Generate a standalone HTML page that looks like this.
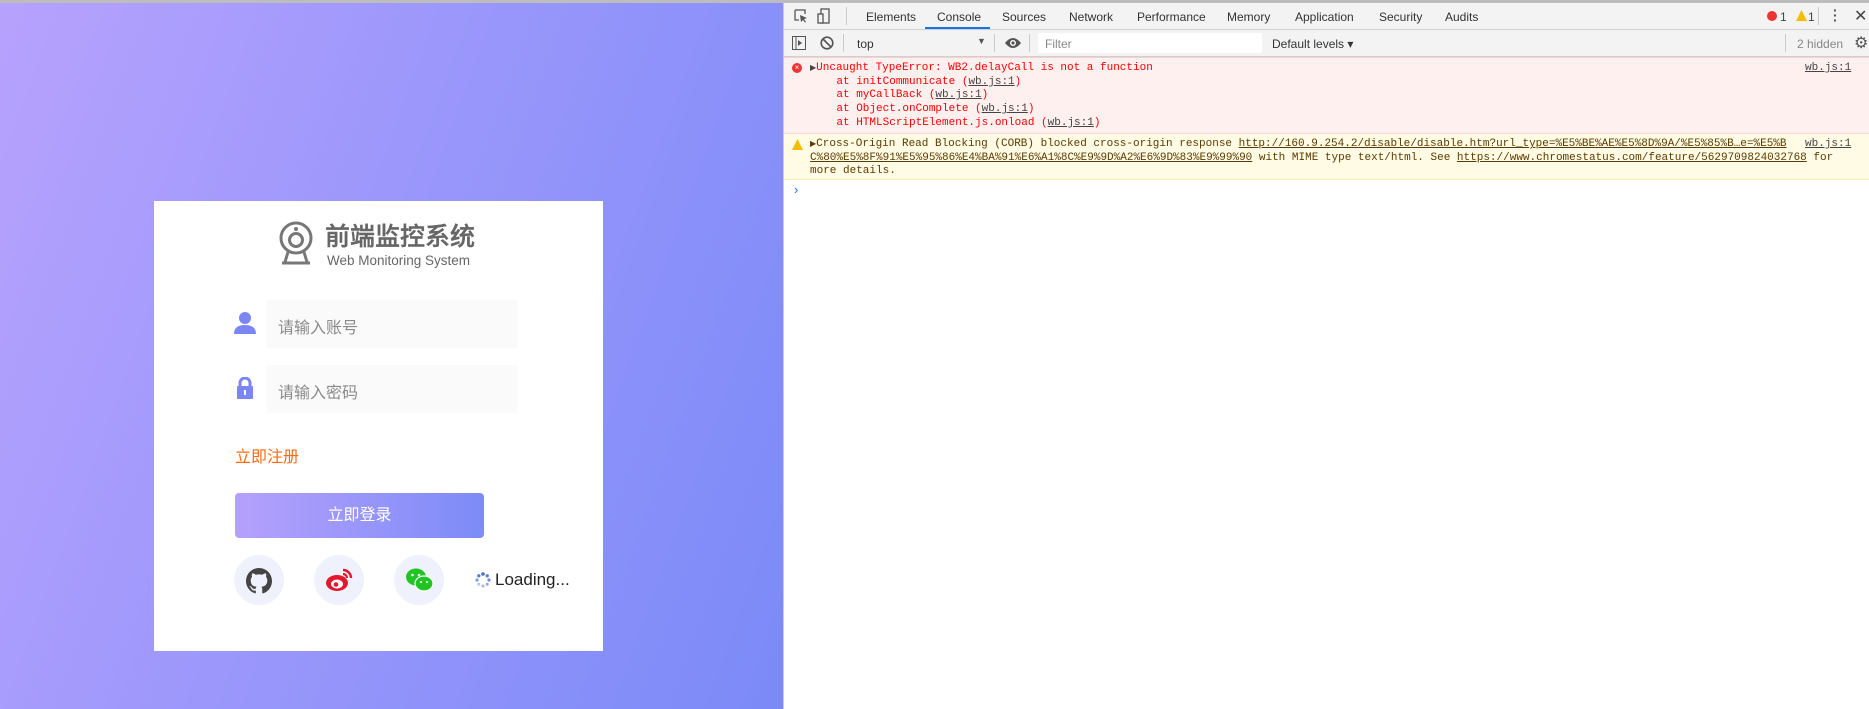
<!DOCTYPE html>
<html><head><meta charset="utf-8"><style>
*{margin:0;padding:0;box-sizing:border-box}
body{width:1869px;height:709px;overflow:hidden;position:relative;font-family:"Liberation Sans","Noto Sans CJK SC",sans-serif;background:#fff}
.abs{position:absolute}
#left{left:0;top:0;width:783px;height:709px;background:linear-gradient(110deg,#b7a2fd 0%,#9b97fb 45%,#7b8af8 100%)}
#topline{left:0;top:0;width:1869px;height:3px;background:#bdbdbd;z-index:5}
.card{left:154px;top:201px;width:449px;height:450px;background:#fff}
.ph{color:#8a8a8a;font-size:16px}
.input{background:#fafafa;width:250px;height:48px}
.circ{width:50px;height:50px;border-radius:50%;background:#eff1fd;top:555px}
#dev{left:783px;top:0;width:1086px;height:709px;background:#fff;border-left:1px solid #ccc}
.tb{background:#f3f3f3;border-bottom:1px solid #d0d0d0;width:1086px;left:0}
.tab{font-size:12px;color:#333;top:10px}
.mono{font-family:"Liberation Mono",monospace;font-size:11px;line-height:13.7px;white-space:pre}
u{text-decoration:underline}
</style></head><body>
<div id="topline" class="abs"></div>
<div id="left" class="abs"></div>
<div class="abs card"></div>
<svg class="abs" style="left:279px;top:221px" width="34" height="45" viewBox="0 0 34 45">
<circle cx="17" cy="17" r="15" fill="none" stroke="#777" stroke-width="3"/>
<circle cx="17" cy="19" r="6.5" fill="none" stroke="#777" stroke-width="3"/>
<circle cx="17" cy="8" r="2" fill="#777"/>
<path d="M9 31 L6 41 M25 31 L28 41 M3 42 H31" stroke="#777" stroke-width="3" fill="none"/>
</svg>
<div class="abs" style="left:325px;top:222px;font-size:25px;color:#666;font-weight:500;line-height:30px;-webkit-text-stroke:0.4px #666">前端监控系统</div>
<div class="abs" style="left:327px;top:253px;font-size:13.5px;color:#666;line-height:16px">Web Monitoring System</div>
<svg class="abs" style="left:234px;top:311px" width="22" height="23" viewBox="0 0 22 23"><circle cx="11" cy="7" r="6" fill="#7b86f4"/><path d="M0 23 Q0 14 11 14 Q22 14 22 23Z" fill="#7b86f4"/></svg>
<div class="abs input" style="left:267px;top:300px"></div>
<div class="abs ph" style="left:278px;top:314px">请输入账号</div>
<svg class="abs" style="left:237px;top:377px" width="16" height="22" viewBox="0 0 16 22"><path d="M3 10 V6 A5 5 0 0 1 13 6 V10" fill="none" stroke="#7b86f4" stroke-width="3"/><rect x="0" y="9" width="16" height="13" rx="1" fill="#7b86f4"/><rect x="7" y="13" width="2" height="5" fill="#fff"/></svg>
<div class="abs input" style="left:267px;top:365px"></div>
<div class="abs ph" style="left:278px;top:379px">请输入密码</div>
<div class="abs" style="left:235px;top:443px;font-size:16px;color:#ff6a13">立即注册</div>
<div class="abs" style="left:235px;top:493px;width:249px;height:45px;border-radius:4px;background:linear-gradient(90deg,#b5a1fc,#7d8bf8);color:#fff;font-size:16px;text-align:center;line-height:45px">立即登录</div>
<div class="abs circ" style="left:234px"></div>
<div class="abs circ" style="left:314px"></div>
<div class="abs circ" style="left:394px"></div>
<svg class="abs" style="left:246px;top:568px" width="26" height="26" viewBox="0 0 16 16"><path fill="#444" d="M8 0C3.58 0 0 3.580 0 8c0 3.540 2.290 6.530 5.470 7.590.4.070.55-.17.55-.38v-1.34c-2.230.48-2.700-1.070-2.700-1.070-.36-.93-.89-1.170-.89-1.170-.73-.5.05-.49.05-.49.8.06 1.230.83 1.230.83.71 1.220 1.870.87 2.330.66.07-.52.28-.87.51-1.070-1.780-.2-3.640-.89-3.640-3.950 0-.87.31-1.590.82-2.150-.08-.2-.36-1.020.08-2.120 0 0 .67-.21 2.200.82a7.600 7.600 0 0 1 4 0c1.530-1.040 2.200-.82 2.200-.82.44 1.100.16 1.920.08 2.120.51.56.82 1.270.82 2.150 0 3.070-1.870 3.750-3.650 3.950.29.25.54.73.54 1.480v2.200c0 .21.15.46.55.38A8 8 0 0 0 16 8c0-4.420-3.580-8-8-8z"/></svg>
<svg class="abs" style="left:325px;top:567px" width="28" height="26" viewBox="0 0 28 26"><ellipse cx="12" cy="16" rx="11" ry="8" fill="#e6162d"/><ellipse cx="12" cy="17" rx="6" ry="4.5" fill="#fff"/><circle cx="11" cy="17.5" r="2.3" fill="#e6162d"/><path d="M18 3 A8 8 0 0 1 26 11" stroke="#e6162d" stroke-width="2.5" fill="none"/><path d="M18 7 A4 4 0 0 1 22 11" stroke="#e6162d" stroke-width="2.2" fill="none"/></svg>
<svg class="abs" style="left:406px;top:567px" width="28" height="26" viewBox="0 0 28 26"><ellipse cx="10" cy="10" rx="10" ry="8.5" fill="#20c521"/><ellipse cx="18" cy="16.5" rx="9" ry="7.5" fill="#20c521" stroke="#fff" stroke-width="1.2"/><circle cx="6.5" cy="8" r="1.3" fill="#fff"/><circle cx="13" cy="8" r="1.3" fill="#fff"/><circle cx="15" cy="15" r="1.1" fill="#fff"/><circle cx="21" cy="15" r="1.1" fill="#fff"/></svg>
<svg class="abs" style="left:475px;top:572px" width="16" height="16" viewBox="0 0 16 16"><g fill="#4a6fd0"><circle cx="8" cy="2" r="1.8"/><circle cx="12.2" cy="3.8" r="1.7" opacity=".9"/><circle cx="14" cy="8" r="1.6" opacity=".8"/><circle cx="12.2" cy="12.2" r="1.5" opacity=".6"/><circle cx="8" cy="14" r="1.5" opacity=".5"/><circle cx="3.8" cy="12.2" r="1.5" opacity=".4"/><circle cx="2" cy="8" r="1.6" opacity=".7"/><circle cx="3.8" cy="3.8" r="1.7" opacity=".9"/></g></svg>
<div class="abs" style="left:495px;top:570px;font-size:17px;color:#222">Loading...</div>

<div id="dev" class="abs">
 <div class="abs tb" style="top:3px;height:27px"></div>
 <div class="abs tb" style="top:30px;height:27px"></div>
 <svg class="abs" style="left:10px;top:9px" width="14" height="14" viewBox="0 0 14 14"><path d="M1 1H11V5M1 1V11H5" stroke="#555" fill="none" stroke-width="1.3"/><path d="M6 6L13 9 10 10 12 13 11 13.5 9 11 7 13Z" fill="#555"/></svg>
 <svg class="abs" style="left:33px;top:8px" width="13" height="16" viewBox="0 0 13 16"><rect x="4" y="1" width="8" height="14" fill="none" stroke="#555" stroke-width="1.3"/><rect x="1" y="6" width="5" height="9" fill="#f3f3f3" stroke="#555" stroke-width="1.3"/></svg>
 <div class="abs" style="left:62px;top:7px;width:1px;height:18px;background:#ccc"></div>
 <div class="abs tab" style="left:82px">Elements</div>
 <div class="abs tab" style="left:153px">Console</div>
 <div class="abs" style="left:141px;top:27px;width:65px;height:2px;background:#1a73e8"></div>
 <div class="abs tab" style="left:218px">Sources</div>
 <div class="abs tab" style="left:285px">Network</div>
 <div class="abs tab" style="left:353px">Performance</div>
 <div class="abs tab" style="left:443px">Memory</div>
 <div class="abs tab" style="left:511px">Application</div>
 <div class="abs tab" style="left:595px">Security</div>
 <div class="abs tab" style="left:661px">Audits</div>
 <div class="abs" style="left:983px;top:11px;width:10px;height:10px;border-radius:50%;background:#e33"></div>
 <div class="abs tab" style="left:996px;color:#444">1</div>
 <svg class="abs" style="left:1012px;top:10px" width="11" height="11" viewBox="0 0 11 11"><path d="M5.5 0L11 11H0Z" fill="#f4bd00"/></svg>
 <div class="abs tab" style="left:1024px;color:#444">1</div>
 <div class="abs" style="left:1034px;top:7px;width:1px;height:18px;background:#ccc"></div>
 <div class="abs" style="left:1049px;top:8px;font-size:14px;color:#555;line-height:5px;font-weight:bold">·<br>·<br>·</div>
 <div class="abs" style="left:1070px;top:6px;font-size:16px;color:#444">✕</div>
 <svg class="abs" style="left:8px;top:36px" width="14" height="14" viewBox="0 0 14 14"><rect x=".5" y=".5" width="13" height="13" fill="none" stroke="#555"/><path d="M4 1V13" stroke="#555"/><path d="M6 4L10 7 6 10Z" fill="#555"/></svg>
 <svg class="abs" style="left:36px;top:36px" width="14" height="14" viewBox="0 0 14 14"><circle cx="7" cy="7" r="5.8" fill="none" stroke="#555" stroke-width="1.6"/><path d="M3 3L11 11" stroke="#555" stroke-width="1.6"/></svg>
 <div class="abs" style="left:59px;top:34px;width:1px;height:18px;background:#ccc"></div>
 <div class="abs tab" style="left:73px;top:37px">top</div>
 <div class="abs" style="left:193px;top:36px;font-size:9px;color:#555">▼</div>
 <div class="abs" style="left:210px;top:34px;width:1px;height:18px;background:#ccc"></div>
 <svg class="abs" style="left:221px;top:36px" width="16" height="14" viewBox="0 0 16 14"><path d="M0 7Q8 -3 16 7Q8 17 0 7Z" fill="#555"/><circle cx="8" cy="7" r="3" fill="#fff"/><circle cx="8" cy="7" r="1.6" fill="#555"/></svg>
 <div class="abs" style="left:245px;top:34px;width:1px;height:18px;background:#ccc"></div>
 <div class="abs" style="left:254px;top:33px;width:224px;height:20px;background:#fff"></div>
 <div class="abs tab" style="left:261px;top:37px;color:#888">Filter</div>
 <div class="abs tab" style="left:488px;top:37px">Default levels ▾</div>
 <div class="abs" style="left:1001px;top:34px;width:1px;height:18px;background:#ccc"></div>
 <div class="abs tab" style="left:1013px;top:37px;color:#888">2 hidden</div>
 <div class="abs" style="left:1070px;top:33px;font-size:16px;color:#555">⚙</div>

 <div class="abs" style="left:0;top:57px;width:1086px;height:77px;background:#fff0f0;border-bottom:1px solid #fbd6d6;border-top:1px solid #f9d0d0"></div>
 <div class="abs" style="left:8px;top:63px;width:10px;height:10px;border-radius:50%;background:#e33;color:#fff;font-size:8px;line-height:10px;text-align:center">×</div>
 <div class="abs mono" style="left:26px;top:62px;color:#f00"><span style="color:#444;font-size:8px">▶</span>Uncaught TypeError: WB2.delayCall is not a function
    at initCommunicate (<u style="color:#444">wb.js:1</u>)
    at myCallBack (<u style="color:#444">wb.js:1</u>)
    at Object.onComplete (<u style="color:#444">wb.js:1</u>)
    at HTMLScriptElement.js.onload (<u style="color:#444">wb.js:1</u>)</div>
 <div class="abs mono" style="left:1021px;top:62px;color:#444"><u>wb.js:1</u></div>
 <div class="abs" style="left:0;top:134px;width:1086px;height:46px;background:#fffbe5;border-bottom:1px solid #fff0b3"></div>
 <svg class="abs" style="left:8px;top:139px" width="11" height="11" viewBox="0 0 11 11"><path d="M5.5 0L11 11H0Z" fill="#f4bd00"/></svg>
 <div class="abs mono" style="left:26px;top:138px;color:#5c3b00"><span style="font-size:8px">▶</span>Cross-Origin Read Blocking (CORB) blocked cross-origin response <u>http://160.9.254.2/disable/disable.htm?url_type=%E5%BE%AE%E5%8D%9A/%E5%85%B…e=%E5%B</u>
<u>C%80%E5%8F%91%E5%95%86%E4%BA%91%E6%A1%8C%E9%9D%A2%E6%9D%83%E9%99%90</u> with MIME type text/html. See <u>https://www.chromestatus.com/feature/5629709824032768</u> for
more details.</div>
 <div class="abs mono" style="left:1021px;top:138px;color:#444"><u>wb.js:1</u></div>
 <div class="abs" style="left:10px;top:182px;color:#1a73e8;font-size:13px">›</div>
</div>
</body></html>
